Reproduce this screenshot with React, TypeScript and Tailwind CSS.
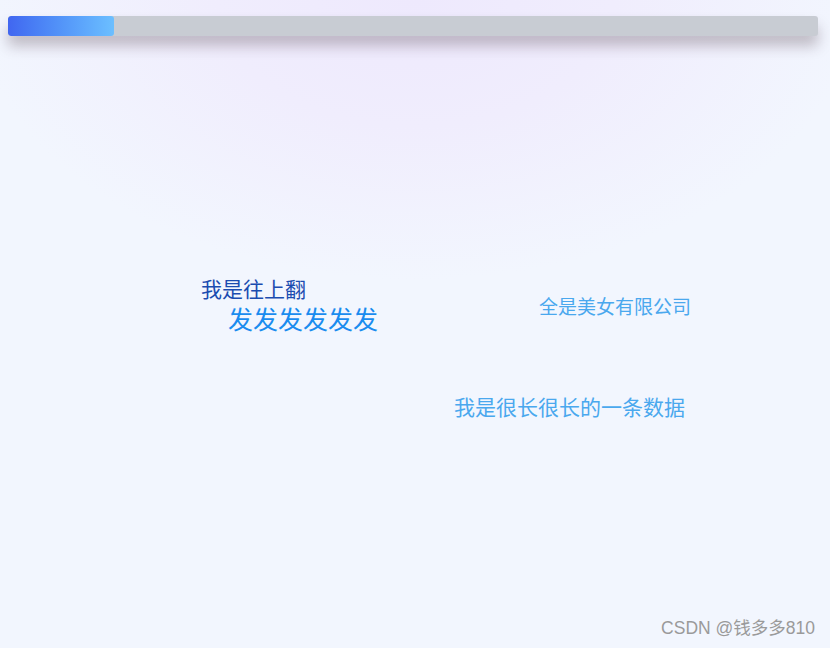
import React from "react";

const font = { fontFamily: '"Noto Sans CJK SC", "Noto Sans", sans-serif' };
const wmFont = { fontFamily: '"Liberation Sans", "Noto Sans CJK SC", sans-serif' };

export default function App() {
  return (
    <div
      className="relative w-[830px] h-[648px] overflow-hidden bg-[#f2f6fe] bg-[radial-gradient(ellipse_440px_280px_at_50%_0%,#eee9fd_0%,#f0edfd_45%,#f2f6fe_100%)]"
      style={font}
    >
      <div className="pt-4 px-2">
        <div className="h-5 w-[810px] rounded-[3px] bg-[#c8ccd3] shadow-[0_10px_14px_rgba(60,40,50,0.28)] overflow-hidden">
          <div className="h-full w-[106px] rounded-[3px] bg-gradient-to-r from-[#4166f0] to-[#6cbfff]" />
        </div>
      </div>

      <div className="absolute left-[201px] top-[277px] h-[22px] text-[21px] leading-[22px] text-[#1b4cb0]">
        我是往上翻
      </div>
      <div className="absolute left-[228px] top-[305px] h-[27px] text-[25px] leading-[27px] text-[#1a8cef]">
        发发发发发发
      </div>
      <div className="absolute left-[539px] top-[296px] text-[19px] leading-none text-[#4aa8ee]">
        全是美女有限公司
      </div>
      <div className="absolute left-[454px] top-[396px] text-[21px] leading-none text-[#4aa8ee]">
        我是很长很长的一条数据
      </div>

      <div
        className="absolute right-[15px] top-[620px] text-[17.5px] leading-none text-[#9a9a9a]"
        style={wmFont}
      >
        CSDN @钱多多810
      </div>
    </div>
  );
}
